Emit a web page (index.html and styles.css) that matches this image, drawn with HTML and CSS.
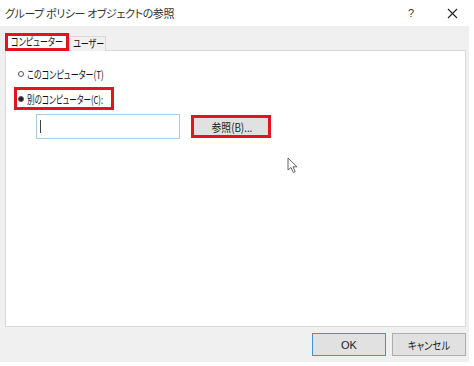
FILE: index.html
```html
<!DOCTYPE html>
<html lang="ja">
<head>
<meta charset="utf-8">
<link rel="stylesheet" href="styles.css">
</head>
<body>
<div class="window">
  <div class="titlebar">
    <span class="title">グループ ポリシー オブジェクトの参照</span>
    <span class="help">?</span>
    <span class="close">
      <svg width="11" height="11" viewBox="0 0 11 11"><path d="M1 1L10 10M10 1L1 10" stroke="#222" stroke-width="1.1" fill="none"/></svg>
    </span>
  </div>
  <div class="client">
    <div class="tabs">
      <div class="tab tab-active"><span class="cond">コンピューター</span></div>
      <div class="tab tab-user"><span class="cond">ユーザー</span></div>
    </div>
    <div class="panel">
      <div class="radio-row">
        <span class="radio"></span>
        <span class="label cond">このコンピューター(T)</span>
      </div>
      <div class="radio-row radio-row-hl">
        <span class="radio radio-on"></span>
        <span class="label cond cond-tight">別のコンピューター(C):</span>
      </div>
      <div class="input-row">
        <div class="textbox"><span class="caret"></span></div>
        <div class="browse-hl"><div class="btn btn-browse"><span class="cond-c">参照(B)...</span></div></div>
      </div>
      <svg class="pointer" width="12" height="17" viewBox="0 0 12 17">
        <path d="M1 1L1 13L4 10.5L6.3 15.5L8.2 14.6L6 9.8L10 9.8Z" fill="#fff" stroke="#555" stroke-width="0.9" stroke-linejoin="round"/>
      </svg>
    </div>
    <div class="footer">
      <div class="btn btn-ok">OK</div>
      <div class="btn"><span class="cond-c">キャンセル</span></div>
    </div>
  </div>
</div>
</body>
</html>
```
FILE: styles.css
```css
* { box-sizing: border-box; }
html, body { margin: 0; padding: 0; }
body {
  width: 474px;
  height: 366px;
  background: #fff;
  font-family: "Noto Sans CJK JP", "Noto Sans", sans-serif;
  font-feature-settings: "palt";
  font-size: 11px;
  color: #111;
  overflow: hidden;
}
.window { width: 469px; }
.titlebar {
  height: 26px;
  display: flex;
  align-items: center;
  padding-left: 5px;
  background: #fff;
}
.title { flex: 1; color: #333; font-size: 11px; letter-spacing: -0.4px; white-space: nowrap; }
.help { width: 14px; margin-right: 25px; color: #333; font-size: 11px; font-family: "Liberation Sans", sans-serif; }
.close { width: 11px; margin-right: 11px; display: flex; }
.cond {
  display: inline-block;
  white-space: nowrap;
  transform: scaleX(0.73);
  transform-origin: left center;
}
.cond-tight { transform: scaleX(0.69); }
.cond-c {
  display: inline-block;
  white-space: nowrap;
  transform: scaleX(0.85);
  transform-origin: center center;
}
.client {
  height: 336px;
  background: #f0f0f0;
  padding: 7px 3px 0 5px;
  display: flex;
  flex-direction: column;
}
.tabs {
  display: flex;
  align-items: flex-end;
  height: 18px;
  position: relative;
  z-index: 1;
  margin-bottom: -1px;
}
.tab {
  height: 15px;
  line-height: 13px;
  font-size: 11px;
  border: 1px solid #d9d9d9;
  border-bottom: none;
  background: #f0f0f0;
  white-space: nowrap;
  overflow: hidden;
}
.tab-user { width: 37px; padding-left: 3px; }
.tab-active {
  height: 18px;
  width: 64px;
  background: #fff;
  border: 3px solid #e3141c;
  line-height: 11px;
  padding: 0 0 0 3px;
}
.panel {
  position: relative;
  height: 277px;
  background: #fff;
  border: 1px solid #d9d9d9;
  padding: 15px 0 0 0;
}
.radio-row {
  display: flex;
  align-items: center;
  height: 16px;
  margin-left: 12px;
  font-size: 11px;
  white-space: nowrap;
}
.radio {
  flex: none;
  width: 6px;
  height: 6px;
  border: 1px solid #555;
  border-radius: 50%;
  margin-right: 3px;
}
.radio-on { background: #222; }
.radio-row-hl {
  margin-top: 5px;
  margin-left: 8px;
  width: 100px;
  height: 23px;
  border: 3px solid #e3141c;
  padding-left: 1px;
}
.input-row {
  display: flex;
  align-items: center;
  margin-top: 4px;
  margin-left: 30px;
}
.textbox {
  width: 144px;
  height: 25px;
  border: 1px solid #a8cbe8;
  background: #fff;
  display: flex;
  align-items: center;
  padding-left: 3px;
}
.caret { width: 1px; height: 13px; background: #444; }
.browse-hl {
  margin-left: 11px;
  width: 80px;
  height: 23px;
  border: 3px solid #e3141c;
  display: flex;
}
.btn {
  width: 74px;
  height: 23px;
  background: #e1e1e1;
  border: 1px solid #adadad;
  display: flex;
  align-items: center;
  justify-content: center;
  font-size: 11px;
  color: #222;
}
.btn-browse { width: 100%; height: 100%; border: none; padding-left: 2px; font-size: 11.5px; }
.btn-ok { border: 1px solid #4a90d6; margin-right: 6px; font-family: "Liberation Sans", sans-serif; }
.pointer { position: absolute; left: 281px; top: 106px; }
.footer {
  display: flex;
  justify-content: flex-end;
  padding-top: 6px;
}
```
